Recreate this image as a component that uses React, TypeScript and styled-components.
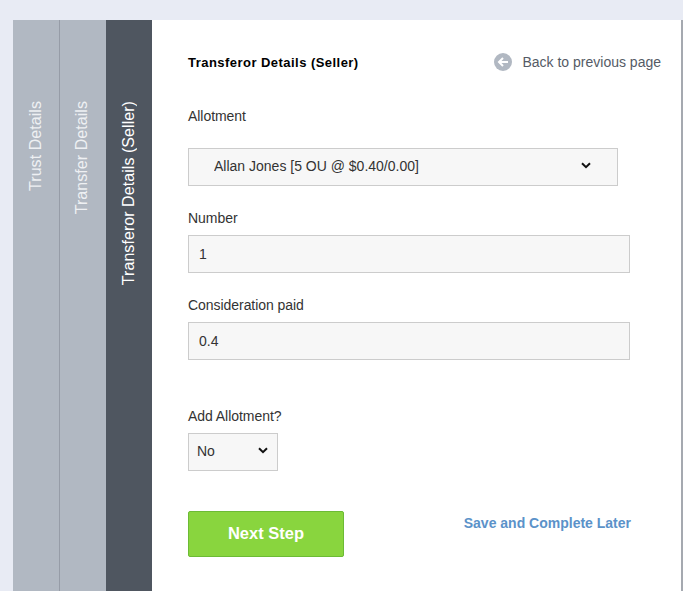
import React from "react";
import styled, { createGlobalStyle } from "styled-components";

const Global = createGlobalStyle`
  html, body { margin: 0; padding: 0; background: #e8ebf4; height: 100%; overflow: hidden; }
  body { font-family: "Liberation Sans", Arial, sans-serif; color: #333; }
`;

const Page = styled.div`
  display: flex;
  height: 591px;
  box-sizing: border-box;
  padding: 20px 0 0 13px;
`;

const Tabs = styled.nav`
  display: flex;
  flex: none;
`;

const Tab = styled.div<{ $active?: boolean; $last?: boolean }>`
  box-sizing: border-box;
  width: ${(p) => (p.$last ? "46px" : "47px")};
  margin-right: ${(p) => (p.$last ? "0" : "-0.5px")};
  height: 100%;
  background: ${(p) => (p.$active ? "#4f5660" : "#b1b8c2")};
  border-right: ${(p) => (p.$last ? "none" : "1px solid #969ca7")};
  color: ${(p) => (p.$active ? "#fff" : "#eef0f3")};
  display: flex;
  justify-content: center;
  padding: 81px 1px 0 0;
  font-size: 16px;
  letter-spacing: 0.06px;
`;

const TabLabel = styled.span`
  writing-mode: vertical-rl;
  transform: rotate(180deg);
  height: max-content;
  line-height: 20px;
  white-space: nowrap;
`;

const Main = styled.main`
  flex: 1;
  background: #fff;
  border-right: 2px solid #a5a9b0;
  padding: 33px 0 0 36px;
  min-width: 0;
`;

const Header = styled.header`
  display: flex;
  justify-content: space-between;
  align-items: center;
  height: 18px;
  padding-right: 20px;
  margin-bottom: 37px;
`;

const Title = styled.h2`
  margin: 0;
  font-size: 13px;
  font-weight: 700;
  color: #000;
  letter-spacing: 0.46px;
`;

const BackLink = styled.a`
  display: flex;
  align-items: center;
  gap: 10px;
  font-size: 14px;
  color: #555b66;
`;

const Field = styled.div<{ $gap: number }>`
  margin-bottom: ${(p) => p.$gap}px;
`;

const Label = styled.label<{ $mb: number }>`
  display: block;
  font-size: 14px;
  line-height: 16px;
  letter-spacing: -0.05px;
  color: #333;
  margin-bottom: ${(p) => p.$mb}px;
`;

const SelectWrap = styled.div<{ $w: number }>`
  position: relative;
  width: ${(p) => p.$w}px;
  height: 38px;
`;

const Select = styled.select<{ $pl: number }>`
  display: block;
  box-sizing: border-box;
  width: 100%;
  height: 100%;
  appearance: none;
  padding: 0 0 2px ${(p) => p.$pl}px;
  font: 14px "Liberation Sans", Arial, sans-serif;
  color: #333;
  background: #f7f7f7;
  border: 1px solid #cccccc;
  border-radius: 0;
  outline: none;
`;

const Chevron = styled.svg<{ $right: number }>`
  position: absolute;
  right: ${(p) => p.$right}px;
  top: 14px;
  width: 10px;
  height: 7px;
  pointer-events: none;
`;

const Input = styled.input`
  display: block;
  box-sizing: border-box;
  width: 442px;
  height: 38px;
  padding: 0 10px;
  font: 14px "Liberation Sans", Arial, sans-serif;
  color: #333;
  background: #f7f7f7;
  border: 1px solid #cccccc;
  border-radius: 0;
  outline: none;
`;

const Actions = styled.div`
  display: flex;
  justify-content: space-between;
  align-items: flex-start;
  width: 443px;
`;

const NextButton = styled.button`
  width: 156px;
  height: 46px;
  padding: 0 0 2px;
  background: #89d53e;
  border: 1px solid #6cbb35;
  border-radius: 2px;
  color: #fff;
  font: 700 16.5px "Liberation Sans", Arial, sans-serif;
`;

const SaveLink = styled.a`
  margin-top: 4px;
  font-size: 14px;
  font-weight: 700;
  line-height: 16px;
  color: #5b92c9;
`;

const ChevronIcon = ({ right }: { right: number }) => (
  <Chevron $right={right} viewBox="0 0 10 7" aria-hidden="true">
    <path d="M1 1.2l4 4 4-4" fill="none" stroke="#111" strokeWidth="2" />
  </Chevron>
);

export default function App() {
  return (
    <>
      <Global />
      <Page>
        <Tabs>
          <Tab><TabLabel>Trust Details</TabLabel></Tab>
          <Tab><TabLabel>Transfer Details</TabLabel></Tab>
          <Tab $active $last><TabLabel>Transferor Details (Seller)</TabLabel></Tab>
        </Tabs>
        <Main>
          <Header>
            <Title>Transferor Details (Seller)</Title>
            <BackLink>
              <svg width="18" height="18" viewBox="0 0 18 18" aria-hidden="true">
                <circle cx="9" cy="9" r="9" fill="#b1b8c2" />
                <path d="M14 9H5.5M9 5L5 9l4 4" fill="none" stroke="#fff" strokeWidth="2" />
              </svg>
              Back to previous page
            </BackLink>
          </Header>
          <Field $gap={24}>
            <Label $mb={24}>Allotment</Label>
            <SelectWrap $w={430}>
              <Select $pl={25} defaultValue="a">
                <option value="a">Allan Jones [5 OU @ $0.40/0.00]</option>
              </Select>
              <ChevronIcon right={27} />
            </SelectWrap>
          </Field>
          <Field $gap={24}>
            <Label $mb={9}>Number</Label>
            <Input defaultValue="1" />
          </Field>
          <Field $gap={48}>
            <Label $mb={9}>Consideration paid</Label>
            <Input defaultValue="0.4" />
          </Field>
          <Field $gap={40}>
            <Label $mb={9}>Add Allotment?</Label>
            <SelectWrap $w={90}>
              <Select $pl={8} defaultValue="No">
                <option>No</option>
              </Select>
              <ChevronIcon right={10} />
            </SelectWrap>
          </Field>
          <Actions>
            <NextButton>Next Step</NextButton>
            <SaveLink>Save and Complete Later</SaveLink>
          </Actions>
        </Main>
      </Page>
    </>
  );
}
